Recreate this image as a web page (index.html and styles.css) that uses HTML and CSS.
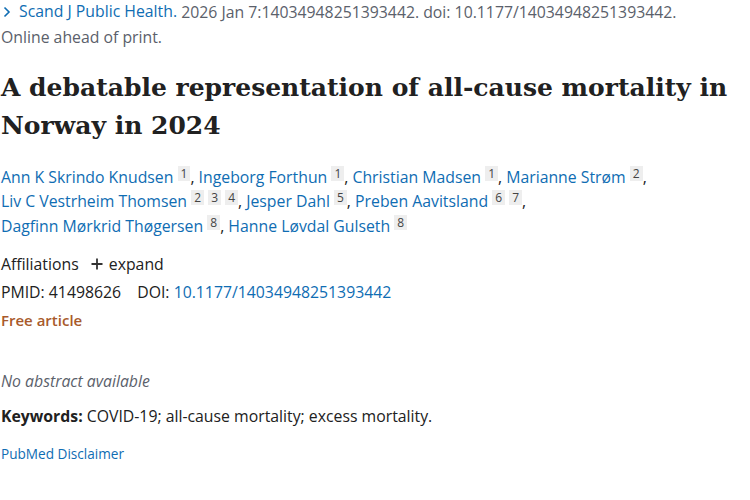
FILE: index.html
```html
<!DOCTYPE html>
<html lang="en">
<head>
<meta charset="utf-8">
<title>A debatable representation of all-cause mortality in Norway in 2024</title>
<link rel="stylesheet" href="styles.css">
</head>
<body>
<main class="article">
  <div class="citation">
    <a class="journal" href="#"><svg class="chev" viewBox="0 0 8 12" width="8" height="12"><path d="M1.5 1.5 L6 6 L1.5 10.5" fill="none" stroke="currentColor" stroke-width="1.6"/></svg>Scand J Public Health.</a>
    <span class="cit">2026 Jan 7:14034948251393442. doi: 10.1177/14034948251393442.</span>
    <br><span class="cit">Online ahead of print.</span>
  </div>

  <h1 class="title">A debatable representation of all-cause mortality in Norway in 2024</h1>

  <div class="authors">
    <span class="author"><a href="#">Ann K Skrindo Knudsen</a> <sup class="aff">1</sup>, </span>
    <span class="author"><a href="#">Ingeborg Forthun</a> <sup class="aff">1</sup>, </span>
    <span class="author"><a href="#">Christian Madsen</a> <sup class="aff">1</sup>, </span>
    <span class="author"><a href="#">Marianne Strøm</a> <sup class="aff">2</sup>, </span>
    <span class="author"><a href="#">Liv C Vestrheim Thomsen</a> <sup class="aff">2</sup> <sup class="aff">3</sup> <sup class="aff">4</sup>, </span>
    <span class="author"><a href="#">Jesper Dahl</a> <sup class="aff">5</sup>, </span>
    <span class="author"><a href="#">Preben Aavitsland</a> <sup class="aff">6</sup> <sup class="aff">7</sup>, </span>
    <span class="author"><a href="#">Dagfinn Mørkrid Thøgersen</a> <sup class="aff">8</sup>, </span>
    <span class="author"><a href="#">Hanne Løvdal Gulseth</a> <sup class="aff">8</sup></span>
  </div>

  <div class="meta">
    <div class="row">Affiliations <span class="expand"><svg class="plus" viewBox="0 0 12 12" width="12" height="12"><path d="M6 0.5 V11.5 M0.5 6 H11.5" stroke="currentColor" stroke-width="1.8" fill="none"/></svg>expand</span></div>
    <div class="row">PMID: 41498626 <span class="doi-label">DOI: <a href="#">10.1177/14034948251393442</a></span></div>
    <div class="row free">Free article</div>
  </div>

  <p class="noabs">No abstract available</p>
  <p class="keywords"><strong>Keywords:</strong> COVID-19; all-cause mortality; excess mortality.</p>
  <a class="disclaimer" href="#">PubMed Disclaimer</a>
</main>
</body>
</html>
```

FILE: styles.css
```css
html, body {
  margin: 0;
  padding: 0;
  background: #fff;
}

body {
  font-family: "Open Sans", "Noto Sans", sans-serif;
  color: #212121;
  font-size: 15.8px;
}

a {
  color: #0f6db3;
  text-decoration: none;
}

.article {
  padding: 0 0 0 1px;
}

.citation {
  line-height: 25px;
  margin-top: -1px;
  color: #5b616b;
}

.journal {
  display: inline-flex;
  align-items: center;
}

.chev {
  margin: 0 8px 0 2px;
  color: #0f6db3;
}

.title {
  margin: 19px 0 0;
  font-family: "DejaVu Serif", serif;
  font-weight: bold;
  font-size: 25px;
  line-height: 38px;
  color: #212121;
}

.authors {
  margin-top: 20px;
  line-height: 24.5px;
}

.author {
  white-space: nowrap;
}

.aff {
  display: inline-block;
  font-size: 12px;
  line-height: 15px;
  background: #eeeeee;
  color: #444;
  padding: 0 3px;
  vertical-align: 5px;
}

.meta {
  margin-top: 12px;
  line-height: 28px;
}

.expand {
  margin-left: 8px;
  display: inline-flex;
  align-items: center;
}

.plus {
  margin-right: 6px;
  color: #333;
}

.doi-label {
  margin-left: 12px;
}

.free {
  color: #a85a2b;
  font-weight: 600;
  font-size: 15px;
}

.noabs {
  margin: 33px 0 0;
  line-height: 28px;
  font-style: italic;
  color: #5b616b;
}

.keywords {
  margin: 7px 0 0;
  line-height: 28px;
}

.keywords strong {
  font-weight: 700;
}

.disclaimer {
  display: block;
  margin-top: 10px;
  font-size: 13.6px;
  line-height: 28px;
}
```
